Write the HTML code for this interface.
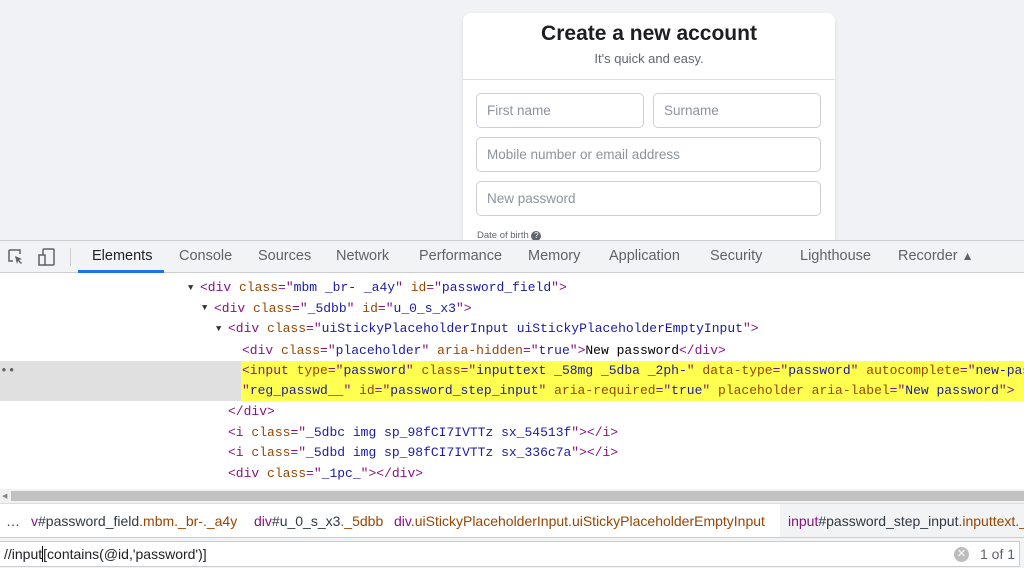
<!DOCTYPE html>
<html><head><meta charset="utf-8"><style>
*{margin:0;padding:0;box-sizing:border-box}
body{width:1024px;height:568px;overflow:hidden;background:#fff;font-family:"Liberation Sans",sans-serif;position:relative}
.top{position:absolute;left:0;top:0;width:1024px;height:240px;background:#f0f2f5}
.card{position:absolute;left:463px;top:13px;width:372px;height:260px;background:#fff;border-radius:8px;box-shadow:0 2px 4px rgba(0,0,0,.1)}
.card h1{position:absolute;top:9px;width:100%;text-align:center;font-size:21px;font-weight:bold;color:#1c1e21}
.card .sub{position:absolute;top:38px;width:100%;text-align:center;font-size:13px;color:#606770}
.card .hr{position:absolute;top:66px;left:0;width:100%;height:1px;background:#dadde1}
.inp{position:absolute;border:1px solid #ccd0d5;border-radius:5px;height:35px;font-size:13.5px;color:#8d949e;padding:9px 10px;background:#fff}
.dob{position:absolute;left:477px;top:230px;font-size:9.5px;color:#606770}
.tb{position:absolute;left:0;top:240px;width:1024px;height:33px;background:#f1f3f4;border-top:1px solid #cbcdd1;border-bottom:1px solid #cbcdd1}
.tab{position:absolute;top:7px;font-size:14.5px;color:#5f6368}
.code{position:absolute;left:0;top:273px;width:1024px;height:216px;background:#fff;font-family:"Liberation Mono",monospace;font-size:13px}
.l{position:absolute;white-space:pre;height:20px;line-height:20px}
.t{color:#881280}.a{color:#994500}.v{color:#1a1aa6}
.tri{position:absolute;font-size:9px;color:#333}
.sb{position:absolute;left:0;top:489px;width:1024px;height:14px;background:#f1f1f1}
.bc{position:absolute;left:0;top:503px;width:1024px;height:34px;background:#fff;border-top:1px solid #dadce0;font-size:14px;color:#303942}
.bc > span{position:absolute;top:9px;white-space:pre}
.sr{position:absolute;left:0;top:537px;width:1024px;height:31px;background:#f1f3f4;border-top:1px solid #cbcdd1}
.sri{position:absolute;left:0;top:3px;width:1020px;height:26px;background:#fff;border:1px solid #cbcdd1;border-left:none}
</style></head><body>
<div class="top"></div>
<div class="card">
<h1>Create a new account</h1>
<div class="sub">It's quick and easy.</div>
<div class="hr"></div>
</div>
<div class="inp" style="left:476px;top:93px;width:168px">First name</div>
<div class="inp" style="left:653px;top:93px;width:168px">Surname</div>
<div class="inp" style="left:476px;top:137px;width:345px">Mobile number or email address</div>
<div class="inp" style="left:476px;top:181px;width:345px">New password</div>
<div class="dob">Date of birth <span style="display:inline-block;width:10px;height:10px;border-radius:50%;background:#606770;color:#fff;font-size:8px;text-align:center;line-height:10px">?</span></div>

<div class="tb">
<svg style="position:absolute;left:7px;top:7px" width="18" height="18" viewBox="0 0 18 18"><path d="M2 2h11v4M2 2v11h4" fill="none" stroke="#5f6368" stroke-width="1.5"/><path d="M8 8l7 3-3 1 3 3-1 1-3-3-1 3z" fill="#5f6368"/></svg>
<svg style="position:absolute;left:37px;top:6px" width="20" height="20" viewBox="0 0 20 20"><rect x="6" y="2" width="11" height="16" rx="1" fill="none" stroke="#5f6368" stroke-width="1.5"/><rect x="2" y="8" width="6" height="10" fill="#f1f3f4" stroke="#5f6368" stroke-width="1.5"/></svg>
<div style="position:absolute;left:70px;top:7px;width:1px;height:18px;background:#ccc"></div>
<div class="tab" style="left:92px;color:#202124">Elements</div>
<div style="position:absolute;left:78px;top:29px;width:86px;height:3px;background:#1a73e8"></div>
<div class="tab" style="left:179px">Console</div>
<div class="tab" style="left:258px">Sources</div>
<div class="tab" style="left:336px">Network</div>
<div class="tab" style="left:419px">Performance</div>
<div class="tab" style="left:528px">Memory</div>
<div class="tab" style="left:609px">Application</div>
<div class="tab" style="left:710px">Security</div>
<div class="tab" style="left:800px">Lighthouse</div>
<div class="tab" style="left:898px">Recorder <span style="font-size:12px">&#9650;</span></div>
</div>

<div class="code">
<div style="position:absolute;left:0;top:88px;width:1024px;height:40px;background:#e0e0e0"></div>
<div style="position:absolute;left:241px;top:88px;width:783px;height:40px;background:#ffff4f"></div>
<div class="l" style="left:0;top:88px;color:#666">••</div>
<div class="tri" style="left:188px;top:10px">&#9660;</div>
<div class="l" style="left:200px;top:5px"><span class="t">&lt;div</span> <span class="a">class</span><span class="t">="</span><span class="v">mbm _br- _a4y</span><span class="t">"</span> <span class="a">id</span><span class="t">="</span><span class="v">password_field</span><span class="t">"&gt;</span></div>
<div class="tri" style="left:202px;top:30px">&#9660;</div>
<div class="l" style="left:214px;top:26px"><span class="t">&lt;div</span> <span class="a">class</span><span class="t">="</span><span class="v">_5dbb</span><span class="t">"</span> <span class="a">id</span><span class="t">="</span><span class="v">u_0_s_x3</span><span class="t">"&gt;</span></div>
<div class="tri" style="left:216px;top:51px">&#9660;</div>
<div class="l" style="left:228px;top:46px"><span class="t">&lt;div</span> <span class="a">class</span><span class="t">="</span><span class="v">uiStickyPlaceholderInput uiStickyPlaceholderEmptyInput</span><span class="t">"&gt;</span></div>
<div class="l" style="left:242px;top:68px"><span class="t">&lt;div</span> <span class="a">class</span><span class="t">="</span><span class="v">placeholder</span><span class="t">"</span> <span class="a">aria-hidden</span><span class="t">="</span><span class="v">true</span><span class="t">"&gt;</span>New password<span class="t">&lt;/div&gt;</span></div>
<div class="l" style="left:242px;top:88px"><span class="t">&lt;input</span> <span class="a">type</span><span class="t">="</span><span class="v">password</span><span class="t">"</span> <span class="a">class</span><span class="t">="</span><span class="v">inputtext _58mg _5dba _2ph-</span><span class="t">"</span> <span class="a">data-type</span><span class="t">="</span><span class="v">password</span><span class="t">"</span> <span class="a">autocomplete</span><span class="t">="</span><span class="v">new-password</span></div>
<div class="l" style="left:242px;top:108px"><span class="t">"</span><span class="v">reg_passwd__</span><span class="t">"</span> <span class="a">id</span><span class="t">="</span><span class="v">password_step_input</span><span class="t">"</span> <span class="a">aria-required</span><span class="t">="</span><span class="v">true</span><span class="t">"</span> <span class="a">placeholder</span> <span class="a">aria-label</span><span class="t">="</span><span class="v">New password</span><span class="t">"&gt;</span></div>
<div class="l" style="left:228px;top:129px"><span class="t">&lt;/div&gt;</span></div>
<div class="l" style="left:228px;top:150px"><span class="t">&lt;i</span> <span class="a">class</span><span class="t">="</span><span class="v">_5dbc img sp_98fCI7IVTTz sx_54513f</span><span class="t">"&gt;&lt;/i&gt;</span></div>
<div class="l" style="left:228px;top:170px"><span class="t">&lt;i</span> <span class="a">class</span><span class="t">="</span><span class="v">_5dbd img sp_98fCI7IVTTz sx_336c7a</span><span class="t">"&gt;&lt;/i&gt;</span></div>
<div class="l" style="left:228px;top:191px"><span class="t">&lt;div</span> <span class="a">class</span><span class="t">="</span><span class="v">_1pc_</span><span class="t">"&gt;&lt;/div&gt;</span></div>
</div>

<div class="sb"><div style="position:absolute;left:11px;top:2px;width:1013px;height:10px;background:#c1c1c1"></div><div style="position:absolute;left:2px;top:3px;font-size:7px;color:#888">&#9664;</div></div>

<div class="bc">
<span style="left:6px;color:#444">…</span>
<span style="left:31px"><span class="t">v</span>#password_field<span class="a">.mbm._br-._a4y</span></span>
<span style="left:254px"><span class="t">div</span>#u_0_s_x3<span class="a">._5dbb</span></span>
<span style="left:394px"><span class="t">div</span><span class="a">.uiStickyPlaceholderInput.uiStickyPlaceholderEmptyInput</span></span>
<div style="position:absolute;left:780px;top:0;width:244px;height:33px;background:#f1f3f4"></div>
<span style="left:788px"><span class="t">input</span>#password_step_input<span class="a">.inputtext._58mg</span></span>
</div>

<div class="sr"><div class="sri">
<div style="position:absolute;left:4px;top:4px;font-size:14px;color:#202124;white-space:pre">//input<span style="border-left:1px solid #000"></span>[contains(@id,'password')]</div>
<div style="position:absolute;left:954px;top:5px;width:15px;height:15px;border-radius:50%;background:#bdbdbd;color:#fff;font-size:11px;line-height:15px;text-align:center">✕</div>
<div style="position:absolute;left:980px;top:4px;font-size:14px;color:#5f6368">1 of 1</div>
</div></div>
</body></html>
